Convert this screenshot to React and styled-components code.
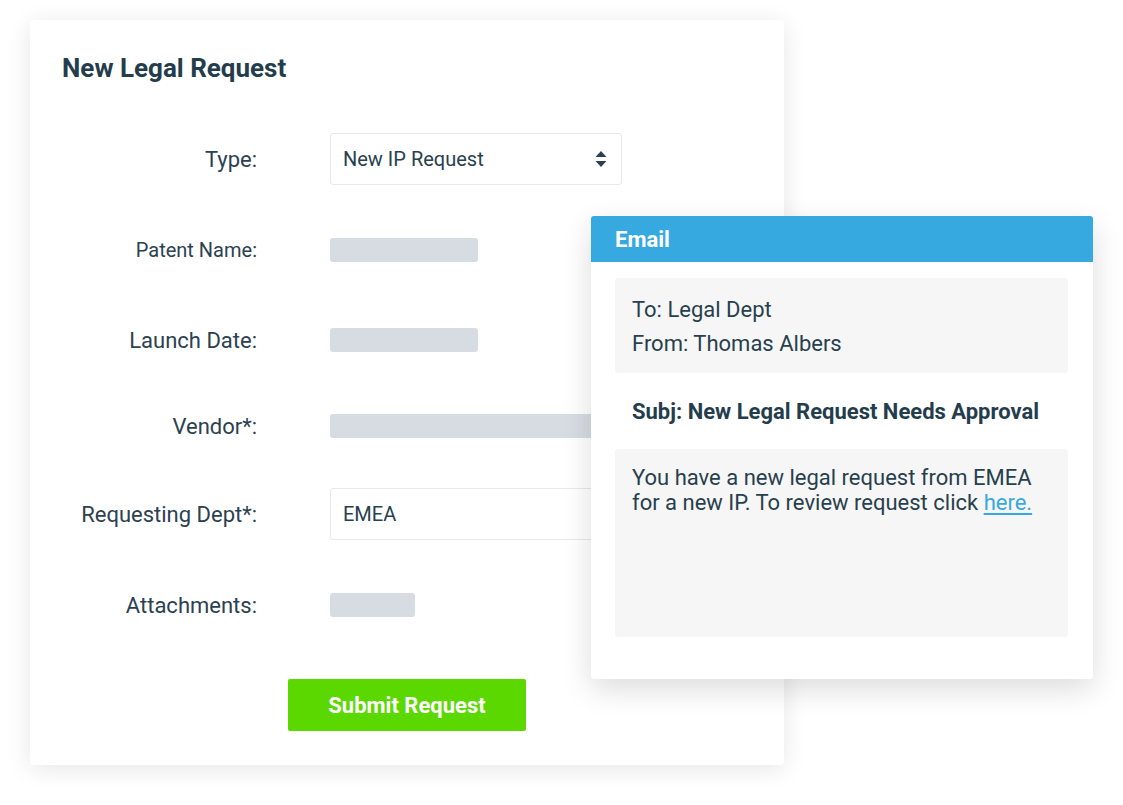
import styled, { createGlobalStyle } from "styled-components";

const Global = createGlobalStyle`
  body {
    margin: 0;
    background: #ffffff;
    font-family: Roboto, "Open Sans", Arial, sans-serif;
    color: #283f4e;
  }
`;

const Stage = styled.div`
  position: relative;
  width: 1123px;
  height: 805px;
  padding: 20px 0 0 30px;
  box-sizing: border-box;
`;

const FormCard = styled.div`
  width: 754px;
  height: 745px;
  box-sizing: border-box;
  background: #fff;
  border-radius: 3px;
  box-shadow: 0 4px 24px rgba(0, 0, 0, 0.1);
  padding: 32px 0 34px;
  display: flex;
  flex-direction: column;
`;

const Title = styled.h1`
  margin: 0 0 0 32px;
  font-size: 26px;
  font-weight: 700;
  line-height: 32px;
  color: #243d4c;
`;

const Form = styled.div`
  display: flex;
  flex-direction: column;
  margin-top: 49px;
`;

const Row = styled.div`
  display: grid;
  grid-template-columns: 227px 1fr;
  column-gap: 73px;
  align-items: center;
  height: 52px;
  margin-top: ${(p) => p.$mt || 0}px;
`;

const Label = styled.label`
  text-align: right;
  font-size: ${(p) => p.$size || 22}px;
  color: #2c4150;
`;

const Select = styled.div`
  width: 292px;
  height: 52px;
  box-sizing: border-box;
  border: 1px solid #e6e8ea;
  border-radius: 3px;
  display: flex;
  align-items: center;
  justify-content: space-between;
  padding: 0 14px 0 12px;
  font-size: 20px;
  color: #283f4e;
`;

const TextBox = styled(Select)`
  width: 420px;
`;

const Bar = styled.div`
  width: ${(p) => p.$w}px;
  height: 24px;
  border-radius: 3px;
  background: #d7dce2;
`;

const Actions = styled.div`
  margin-top: auto;
  display: flex;
  justify-content: center;
`;

const Submit = styled.button`
  width: 238px;
  height: 52px;
  border: none;
  border-radius: 2px;
  background: #5bd800;
  color: #fff;
  font-family: Roboto, Arial, sans-serif;
  font-size: 22px;
  font-weight: 700;
`;

const EmailCard = styled.div`
  position: absolute;
  left: 591px;
  top: 216px;
  width: 502px;
  height: 463px;
  background: #fff;
  border-radius: 3px;
  box-shadow: 0 10px 30px rgba(0, 0, 0, 0.14);
  display: flex;
  flex-direction: column;
  overflow: hidden;
`;

const EmailHead = styled.div`
  height: 46px;
  background: #36a9e1;
  color: #fff;
  font-size: 22px;
  font-weight: 700;
  display: flex;
  align-items: center;
  padding-left: 24px;
`;

const EmailBody = styled.div`
  padding: 16px 25px 42px 24px;
  display: flex;
  flex-direction: column;
  flex: 1;
`;

const Panel = styled.div`
  background: #f6f6f6;
  border-radius: 3px;
  padding: ${(p) => p.$pad};
  font-size: 22px;
  line-height: ${(p) => p.$lh}px;
  color: #283f4e;
  flex: ${(p) => (p.$grow ? 1 : "none")};
  height: ${(p) => (p.$h ? `${p.$h}px` : "auto")};
  box-sizing: border-box;
`;

const Subject = styled.div`
  font-size: 22px;
  font-weight: 700;
  padding: 0 17px;
  height: 76px;
  display: flex;
  align-items: center;
  color: #243d4c;
`;

const Link = styled.a`
  color: #36a9e1;
  text-decoration: underline;
  text-underline-offset: 3px;
`;

const Arrows = () => (
  <svg width="12" height="18" viewBox="0 0 12 18">
    <path d="M6 1 L11.5 7 H0.5 Z" fill="#2c4150" />
    <path d="M6 17 L11.5 11 H0.5 Z" fill="#2c4150" />
  </svg>
);

export default function App() {
  return (
    <>
      <Global />
      <Stage>
        <FormCard>
          <Title>New Legal Request</Title>
          <Form>
            <Row>
              <Label>Type:</Label>
              <Select>
                New IP Request
                <Arrows />
              </Select>
            </Row>
            <Row $mt={39}>
              <Label $size={20}>Patent Name:</Label>
              <Bar $w={148} />
            </Row>
            <Row $mt={38}>
              <Label>Launch Date:</Label>
              <Bar $w={148} />
            </Row>
            <Row $mt={34}>
              <Label>Vendor*:</Label>
              <Bar $w={380} />
            </Row>
            <Row $mt={36}>
              <Label>Requesting Dept*:</Label>
              <TextBox>EMEA</TextBox>
            </Row>
            <Row $mt={39}>
              <Label>Attachments:</Label>
              <Bar $w={85} />
            </Row>
          </Form>
          <Actions>
            <Submit>Submit Request</Submit>
          </Actions>
        </FormCard>

        <EmailCard>
          <EmailHead>Email</EmailHead>
          <EmailBody>
            <Panel $pad="15px 17px" $lh={34} $h={95}>
              <div>To: Legal Dept</div>
              <div>From: Thomas Albers</div>
            </Panel>
            <Subject>Subj: New Legal Request Needs Approval</Subject>
            <Panel $pad="16px 17px" $lh={25} $grow>
              You have a new legal request from EMEA
              <br />
              for a new IP. To review request click <Link>here.</Link>
            </Panel>
          </EmailBody>
        </EmailCard>
      </Stage>
    </>
  );
}
